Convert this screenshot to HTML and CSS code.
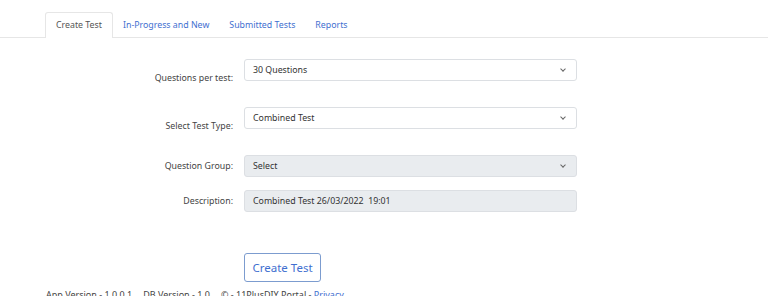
FILE: index.html
```html
<!DOCTYPE html>
<html lang="en">
<head>
    <meta charset="UTF-8" />
    <meta name="viewport" content="width=device-width, initial-scale=1.0"/>
    <title>Create Test</title>
    <link rel="stylesheet" href="styles.css">
</head>
<body>
    <ul class="tabs">
        <li class="tab active">Create Test</li>
        <li class="tab">In-Progress and New</li>
        <li class="tab">Submitted Tests</li>
        <li class="tab">Reports</li>
    </ul>

    <div class="form">
        <div class="row row-low">
            <label>Questions per test:</label>
            <div class="control select">30 Questions</div>
        </div>
        <div class="row row-low row-wide">
            <label>Select Test Type:</label>
            <div class="control select">Combined Test</div>
        </div>
        <div class="row row-wide">
            <label>Question Group:</label>
            <div class="control select disabled">Select</div>
        </div>
        <div class="row row-tight">
            <label>Description:</label>
            <div class="control disabled">Combined Test 26/03/2022&nbsp; 19:01</div>
        </div>
        <div class="actions">
            <button class="btn">Create Test</button>
        </div>
    </div>

    <div class="footer">
        <span>App Version - 1.0.0.1</span>
        <span>DB Version - 1.0</span>
        <span>© - 11PlusDIY Portal - <a href="#">Privacy</a></span>
    </div>
</body>
</html>
```

FILE: styles.css
```css
body {
    font-family: "Noto Sans", "Open Sans", sans-serif;
    font-size: 8.8px;
    color: #212529;
    margin: 0;
    background: #fff;
}

.tabs {
    display: flex;
    list-style: none;
    margin: 12px 0 0;
    padding: 0 0 0 45px;
    border-bottom: 1px solid #e6e6e6;
}

.tab {
    line-height: 13px;
    padding: 6px 9px 5px;
    color: #3f6fd0;
    border: 1px solid transparent;
    border-bottom: none;
    border-radius: 3px 3px 0 0;
    margin-bottom: -1px;
}

.tab.active {
    color: #555;
    border-color: #e6e6e6;
    background: #fff;
    padding: 6px 10px;
}

.form {
    padding-top: 21px;
}

.row {
    display: flex;
    align-items: center;
    height: 22px;
}

.row-wide {
    margin-top: 26px;
}

.row-tight {
    margin-top: 13px;
}

.row label {
    width: 244px;
    text-align: right;
    color: #444;
    padding-right: 11px;
    box-sizing: border-box;
}

.row-low label {
    padding-top: 16px;
}

.control {
    width: 333px;
    height: 22px;
    box-sizing: border-box;
    border: 1px solid #dcdfe3;
    border-radius: 3px;
    padding: 0 8px;
    display: flex;
    align-items: center;
    color: #333;
}

.select {
    position: relative;
}

.select::after {
    content: '';
    position: absolute;
    right: 11px;
    top: 7px;
    width: 3px;
    height: 3px;
    border-right: 1px solid #666;
    border-bottom: 1px solid #666;
    transform: rotate(45deg);
}

.disabled {
    background: #e9ecef;
}

.actions {
    padding: 41px 0 0 244px;
}

.btn {
    display: block;
    font-family: inherit;
    font-size: 11.5px;
    color: #3f6fd0;
    background: #fff;
    border: 1px solid #7c9ccf;
    border-radius: 3px;
    width: 77px;
    height: 29px;
    padding: 0;
}

.footer {
    display: flex;
    gap: 11px;
    padding: 6px 0 0 46px;
    font-size: 9px;
    color: #444;
    white-space: nowrap;
}

.footer a {
    color: #3f6fd0;
    text-decoration: none;
}
```
